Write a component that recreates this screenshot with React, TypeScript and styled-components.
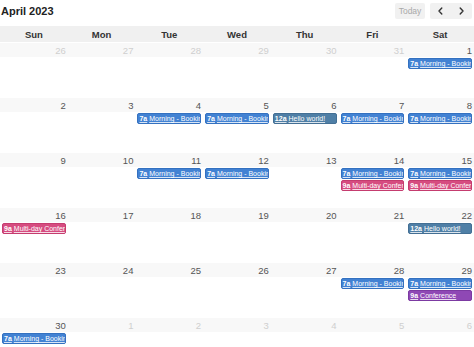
import React from 'react';
import styled, { createGlobalStyle } from 'styled-components';

const GlobalStyle = createGlobalStyle`
  html, body {
    margin: 0;
    padding: 0;
    background: #fff;
    overflow: hidden;
  }
  body {
    font-family: 'Liberation Sans', Arial, sans-serif;
    color: #333;
  }
`;

type Tone = 'blue' | 'slate' | 'pink' | 'purple';

const tones: Record<Tone, { bg: string; border: string }> = {
  blue: { bg: '#4282d3', border: '#3471c0' },
  slate: { bg: '#4f7fa6', border: '#436f94' },
  pink: { bg: '#d64c80', border: '#c53c6f' },
  purple: { bg: '#8f48b5', border: '#7c3aa2' },
};

type CalEvent = { time: string; title: string; tone: Tone };

type Day = { num: number; muted?: boolean; events?: CalEvent[] };

const morning: CalEvent = { time: '7a', title: 'Morning - Booking', tone: 'blue' };
const hello: CalEvent = { time: '12a', title: 'Hello world!', tone: 'slate' };
const multi: CalEvent = { time: '9a', title: 'Multi-day Conference', tone: 'pink' };
const conf: CalEvent = { time: '9a', title: 'Conference', tone: 'purple' };

const weeks: Day[][] = [
  [
    { num: 26, muted: true },
    { num: 27, muted: true },
    { num: 28, muted: true },
    { num: 29, muted: true },
    { num: 30, muted: true },
    { num: 31, muted: true },
    { num: 1, events: [morning] },
  ],
  [
    { num: 2 },
    { num: 3 },
    { num: 4, events: [morning] },
    { num: 5, events: [morning] },
    { num: 6, events: [hello] },
    { num: 7, events: [morning] },
    { num: 8, events: [morning] },
  ],
  [
    { num: 9 },
    { num: 10 },
    { num: 11, events: [morning] },
    { num: 12, events: [morning] },
    { num: 13 },
    { num: 14, events: [morning, multi] },
    { num: 15, events: [morning, multi] },
  ],
  [
    { num: 16, events: [multi] },
    { num: 17 },
    { num: 18 },
    { num: 19 },
    { num: 20 },
    { num: 21 },
    { num: 22, events: [hello] },
  ],
  [
    { num: 23 },
    { num: 24 },
    { num: 25 },
    { num: 26 },
    { num: 27 },
    { num: 28, events: [morning] },
    { num: 29, events: [morning, conf] },
  ],
  [
    { num: 30, events: [morning] },
    { num: 1, muted: true },
    { num: 2, muted: true },
    { num: 3, muted: true },
    { num: 4, muted: true },
    { num: 5, muted: true },
    { num: 6, muted: true },
  ],
];

const dayNames = ['Sun', 'Mon', 'Tue', 'Wed', 'Thu', 'Fri', 'Sat'];

const Calendar = styled.div`
  width: 474px;
  display: flex;
  flex-direction: column;
`;

const Toolbar = styled.div`
  height: 26px;
  display: flex;
  align-items: center;
  justify-content: space-between;
  padding: 0 2px 0 1px;
`;

const Title = styled.h2`
  margin: 0;
  font-size: 11px;
  font-weight: 700;
  color: #222;
  position: relative;
  top: -2px;
`;

const Controls = styled.div`
  display: flex;
  gap: 5px;
  position: relative;
  top: -2px;
`;

const TodayButton = styled.button`
  height: 16px;
  width: 30px;
  padding: 0;
  border: none;
  border-radius: 2px;
  background: #f1f1f1;
  color: #a9a9a9;
  font-family: inherit;
  font-size: 8.5px;
`;

const NavGroup = styled.div`
  display: flex;
  background: #f1f1f1;
  border-radius: 2px;
  height: 16px;
`;

const NavButton = styled.button`
  width: 21px;
  height: 16px;
  padding: 0;
  border: none;
  background: transparent;
  display: flex;
  align-items: center;
  justify-content: center;
`;

const HeaderRow = styled.div`
  display: grid;
  grid-template-columns: repeat(7, 1fr);
  height: 16px;
  background: #f0f0f0;
  margin-bottom: 1px;
`;

const HeaderCell = styled.div`
  display: flex;
  align-items: center;
  justify-content: center;
  font-size: 9.5px;
  font-weight: 700;
  color: #333;
`;

const Week = styled.div`
  display: grid;
  grid-template-columns: repeat(7, 1fr);
  height: 55px;
`;

const Cell = styled.div`
  display: flex;
  flex-direction: column;
  min-width: 0;
`;

const DateStrip = styled.div<{ $muted?: boolean }>`
  height: 14px;
  background: #f8f8f8;
  display: flex;
  align-items: center;
  justify-content: flex-end;
  padding-right: 2px;
  font-size: 9.5px;
  color: ${(p) => (p.$muted ? '#cfcfcf' : '#555')};
`;

const EventList = styled.div`
  display: flex;
  flex-direction: column;
  gap: 1px;
  padding: 1px 2px 0 2px;
`;

const EventBar = styled.a<{ $tone: Tone }>`
  display: block;
  height: 11px;
  box-sizing: border-box;
  line-height: 9px;
  background: ${(p) => tones[p.$tone].bg};
  border: 1px solid ${(p) => tones[p.$tone].border};
  border-radius: 2px;
  color: #fff;
  font-size: 7px;
  white-space: nowrap;
  overflow: hidden;
  padding: 0 1px;
  text-decoration: underline;
  text-decoration-color: rgba(255, 255, 255, 0.8);
  text-underline-offset: 1px;
`;

const Time = styled.b`
  font-weight: 700;
  margin-right: 2px;
`;

const Chevron = ({ dir }: { dir: 'left' | 'right' }) => (
  <svg width="7" height="8" viewBox="0 0 7 8">
    <path
      d={dir === 'left' ? 'M4.8 1 L2 4 L4.8 7' : 'M2.2 1 L5 4 L2.2 7'}
      fill="none"
      stroke="#333"
      strokeWidth="1.4"
      strokeLinecap="round"
      strokeLinejoin="round"
    />
  </svg>
);

export default function App() {
  return (
    <>
      <GlobalStyle />
      <Calendar>
        <Toolbar>
          <Title>April 2023</Title>
          <Controls>
            <TodayButton>Today</TodayButton>
            <NavGroup>
              <NavButton>
                <Chevron dir="left" />
              </NavButton>
              <NavButton>
                <Chevron dir="right" />
              </NavButton>
            </NavGroup>
          </Controls>
        </Toolbar>
        <HeaderRow>
          {dayNames.map((d) => (
            <HeaderCell key={d}>{d}</HeaderCell>
          ))}
        </HeaderRow>
        {weeks.map((week, wi) => (
          <Week key={wi}>
            {week.map((day, di) => (
              <Cell key={di}>
                <DateStrip $muted={day.muted}>{day.num}</DateStrip>
                <EventList>
                  {day.events?.map((ev, ei) => (
                    <EventBar key={ei} $tone={ev.tone}>
                      <Time>{ev.time}</Time>
                      {ev.title}
                    </EventBar>
                  ))}
                </EventList>
              </Cell>
            ))}
          </Week>
        ))}
      </Calendar>
    </>
  );
}
